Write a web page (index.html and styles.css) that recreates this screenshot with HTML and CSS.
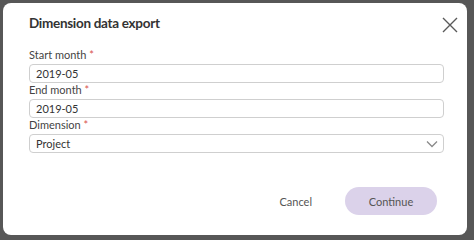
FILE: index.html
```html
<!DOCTYPE html>
<html lang="en">
<head>
    <meta charset="UTF-8">
    <title>Dimension data export</title>
    <link rel="stylesheet" href="styles.css">
</head>
<body>
    <div class="dialog">
        <div class="dialog-header">
            <h2>Dimension data export</h2>
            <button class="close" aria-label="Close">
                <svg width="16" height="16" viewBox="0 0 16 16">
                    <path d="M1 1L15 15M15 1L1 15" stroke="#5a5a5a" stroke-width="1.4" fill="none"/>
                </svg>
            </button>
        </div>
        <form class="dialog-body">
            <label class="field">
                <span class="label">Start month <b>*</b></span>
                <span class="input">2019-05</span>
            </label>
            <label class="field">
                <span class="label">End month <b>*</b></span>
                <span class="input">2019-05</span>
            </label>
            <label class="field">
                <span class="label">Dimension <b>*</b></span>
                <span class="input select">
                    Project
                    <svg width="12" height="8" viewBox="0 0 12 8">
                        <path d="M1 1.5L6 6.5L11 1.5" stroke="#8a8a8a" stroke-width="1.3" fill="none"/>
                    </svg>
                </span>
            </label>
        </form>
        <div class="dialog-footer">
            <button class="btn-text">Cancel</button>
            <button class="btn-primary">Continue</button>
        </div>
    </div>
</body>
</html>
```

FILE: styles.css
```css
html, body {
    margin: 0;
    height: 100%;
}
body {
    background-color: #575757;
    font-family: Lato, Arial, sans-serif;
    padding: 3px 7px 5px 3px;
    box-sizing: border-box;
}
.dialog {
    background: #fff;
    height: 100%;
    border-radius: 8px;
    box-sizing: border-box;
    padding: 0 23px 0 26px;
    display: flex;
    flex-direction: column;
}
.dialog-header {
    display: flex;
    justify-content: space-between;
    align-items: center;
    height: 40px;
}
.dialog-header h2 {
    margin: 0;
    font-size: 13.5px;
    font-weight: 700;
    color: #333;
    letter-spacing: -0.3px;
}
.close {
    background: none;
    border: 0;
    padding: 0;
    margin-right: -14px;
    margin-top: 4px;
    display: flex;
}
.dialog-body {
    margin-top: 5px;
    display: flex;
    flex-direction: column;
}
.field {
    display: flex;
    flex-direction: column;
}
.label {
    font-size: 11px;
    color: #444;
    height: 16px;
    line-height: 14px;
}
.label b {
    color: #d9534f;
    font-weight: normal;
}
.input {
    height: 19px;
    border: 1px solid #cfcfcf;
    border-radius: 4px;
    box-sizing: border-box;
    font-size: 11px;
    color: #333;
    padding: 0 6px;
    display: flex;
    align-items: center;
}
.select {
    justify-content: space-between;
    padding-right: 5px;
}
.dialog-footer {
    margin-top: auto;
    margin-bottom: 20px;
    display: flex;
    justify-content: flex-end;
    align-items: center;
    gap: 33px;
    margin-right: 7px;
}
.btn-text {
    background: none;
    border: 0;
    padding: 0;
    font-family: inherit;
    font-size: 11px;
    color: #555;
}
.btn-primary {
    background: #dbd2ea;
    border: 0;
    border-radius: 14px;
    width: 92px;
    height: 28px;
    font-family: inherit;
    font-size: 11px;
    color: #555;
}
```
